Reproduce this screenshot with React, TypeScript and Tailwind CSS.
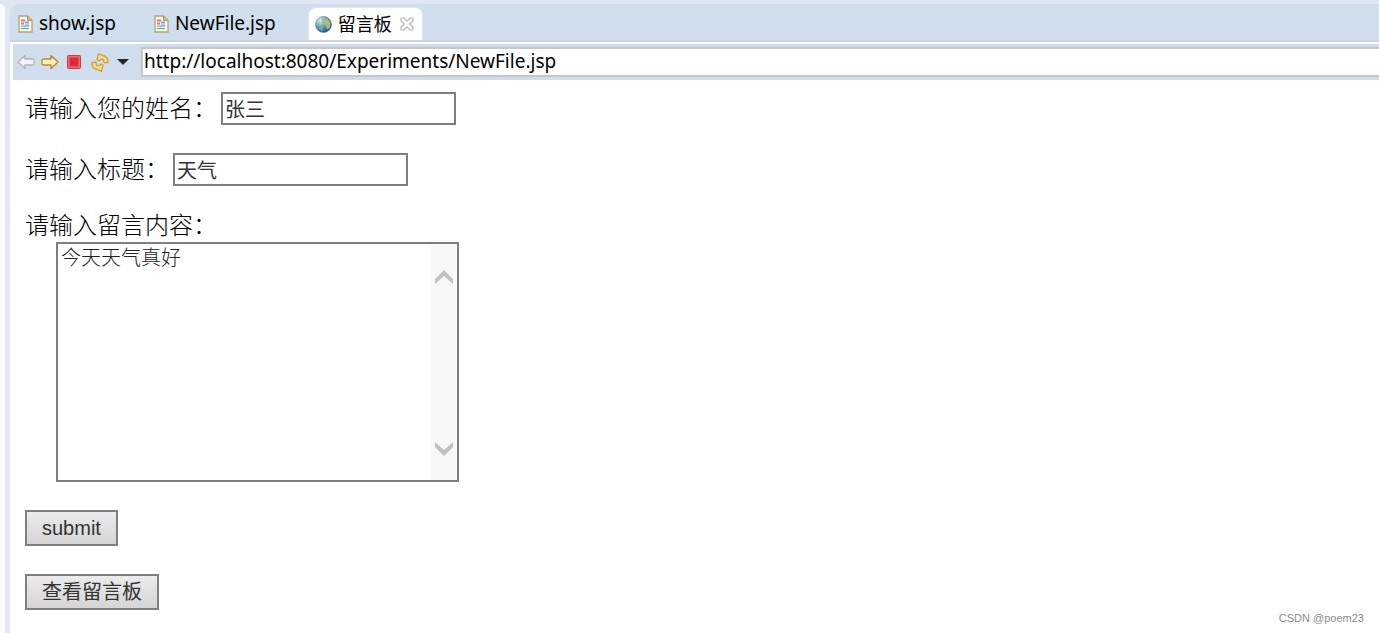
import { useState } from "react"
import type { FormEvent, ReactNode } from "react"

const uiFont = "font-['Noto_Sans','Noto_Sans_CJK_SC',sans-serif]"
const formFont = "font-['Liberation_Sans','Noto_Sans_CJK_SC',sans-serif]"

function JspFileIcon() {
  return (
    <svg width="15" height="18" viewBox="0 0 15 18" fill="none" aria-hidden="true">
      <path d="M1 1h8.5L14 5.5V17H1z" fill="#fbfaf0" stroke="#b3a36e" strokeWidth="1.3" />
      <path d="M9.5 1v4.5H14z" fill="#dcc27c" stroke="#b59b58" />
      <path d="M3 5.5h4M3 8.5h3" stroke="#e5707f" strokeWidth="2" />
      <path d="M7 7.5h4M7 10.5h4" stroke="#7da3e0" strokeWidth="2" />
      <path d="M3 11h4" stroke="#a5b9dd" strokeWidth="1.5" />
      <path d="M3 13.5h8" stroke="#6fbaa5" strokeWidth="1.5" />
    </svg>
  )
}

function GlobeIcon() {
  return (
    <svg width="17" height="17" viewBox="0 0 17 17" aria-hidden="true">
      <defs>
        <radialGradient id="globe" cx="0.3" cy="0.25" r="0.85">
          <stop offset="0" stopColor="#e2f3fa" />
          <stop offset="0.45" stopColor="#62a3cd" />
          <stop offset="1" stopColor="#1d4781" />
        </radialGradient>
      </defs>
      <circle cx="8.5" cy="8.5" r="8" fill="url(#globe)" stroke="#55789c" strokeWidth="0.6" />
      <path d="M6.5 3.5 9 2l4 1 2.5 4-.5 4-2 2.5-1.5-1L11 9.500 8.5 8 7 6z" fill="#a9bd72" />
      <path d="m2 5 2.5-2.5 1 1.500-2 3z" fill="#c4d8a2" />
      <path d="m4 10 3 .5 1.500 2-1.500 2.500-2.500-2z" fill="#7fae86" />
    </svg>
  )
}

function CloseIcon() {
  return (
    <svg width="14" height="14" viewBox="0 0 14 14" aria-hidden="true">
      <path
        d="M1 1h3l3 3.200L10 1h3v3L9.800 7l3.200 3v3h-3L7 9.800 4 13H1v-3l3.200-3L1 4z"
        fill="#fff"
        stroke="#b5b5b5"
        strokeWidth="1.2"
        strokeLinejoin="round"
      />
    </svg>
  )
}

function ArrowIcon({ back = false }: { back?: boolean }) {
  return (
    <svg width="18" height="16" viewBox="0 0 18 16" aria-hidden="true">
      {back ? (
        <path d="M1 8l7-6.500V5h7.500q1.500 0 1.500 1.500v3q0 1.500-1.500 1.500H8v3.500z" fill="#f5f5f5" stroke="#b3b4b7" strokeWidth="1.4" strokeLinejoin="round" />
      ) : (
        <path d="M17 8l-7-6.500V5H2.500Q1 5 1 6.500v3Q1 11 2.500 11H10v3.500z" fill="#fff0b8" stroke="#c18a28" strokeWidth="1.4" strokeLinejoin="round" />
      )}
    </svg>
  )
}

function StopIcon() {
  return (
    <svg width="14" height="14" viewBox="0 0 14 14" aria-hidden="true">
      <rect x="0.5" y="0.5" width="13" height="13" rx="1" fill="#ea6a73" stroke="#cf3946" />
      <rect x="3" y="3" width="8" height="8" fill="#e32534" stroke="#d5303d" strokeWidth="0.8" />
    </svg>
  )
}

function RefreshIcon() {
  return (
    <svg width="18" height="19" viewBox="0 0 18 19" aria-hidden="true">
      <g fill="#fbd987" stroke="#cf962f" strokeWidth="1.1" strokeLinejoin="round">
        <path d="M7.500 1 6 7l2 1.500 1.500-1.500L11 6.500c1.500.3 2 1.500 2 3.500h4c.3-4-1.500-7-5.500-7z" transform="translate(0 -.4)" />
        <path d="M10.500 18 12 12l-2-1.500L8.500 12 7 12.500c-1.500-.3-2-1.500-2-3.500H1c-.3 4 1.500 7 5.500 7z" transform="translate(0 .4)" />
      </g>
    </svg>
  )
}

function Tab({ icon, title, active = false }: { icon: ReactNode; title: string; active?: boolean }) {
  if (active) {
    return (
      <div className="flex items-center gap-2 rounded-t-lg border border-b-0 border-[#dfe5f0] bg-white px-1.5">
        <button type="button" role="tab" aria-selected="true" className="flex items-center gap-1.5 text-lg whitespace-nowrap">
          {icon}
          {title}
        </button>
        <button type="button" aria-label="Close" className="pr-0.5">
          <CloseIcon />
        </button>
      </div>
    )
  }
  return (
    <button type="button" role="tab" aria-selected="false" className="flex items-center gap-1.5 whitespace-nowrap">
      {icon}
      {title}
    </button>
  )
}

function Chevron({ down = false }: { down?: boolean }) {
  return (
    <svg width="18" height="14" viewBox="0 0 18 14" fill="#c1c1c1" aria-hidden="true">
      {down ? <path d="M0 0v5l9 9 9-9V0L9 8z" /> : <path d="M0 14V9l9-9 9 9v5L9 6z" />}
    </svg>
  )
}

function Toolbar() {
  const [url, setUrl] = useState("http://localhost:8080/Experiments/NewFile.jsp")

  return (
    <div className="ml-[3px] mt-0.5 flex h-9 items-center bg-[#cfdded] pl-1">
      <div className="flex flex-none items-center gap-1.5">
        <button type="button" aria-label="Back">
          <ArrowIcon back />
        </button>
        <button type="button" aria-label="Forward">
          <ArrowIcon />
        </button>
        <button type="button" aria-label="Stop" className="px-0.5">
          <StopIcon />
        </button>
        <button type="button" aria-label="Refresh" className="pl-0.5">
          <RefreshIcon />
        </button>
        <button type="button" aria-label="History" className="px-0.5">
          <svg width="12" height="6" viewBox="0 0 12 6" aria-hidden="true">
            <path d="M0 0h12L6 6z" fill="#272727" />
          </svg>
        </button>
      </div>
      <input
        type="text"
        aria-label="URL"
        value={url}
        onChange={(e) => setUrl(e.target.value)}
        className="ml-2.5 h-[30px] min-w-0 flex-1 border-2 border-r-0 border-[#c3c8cd] bg-white px-px pb-0.5 text-[19px] outline-none"
      />
    </div>
  )
}

function MessageForm() {
  const [name, setName] = useState("张三")
  const [title, setTitle] = useState("天气")
  const [content, setContent] = useState("今天天气真好")

  const handleSubmit = (e: FormEvent) => e.preventDefault()

  const label = "text-2xl leading-8 font-light text-black"
  const input = "h-[33px] w-[235px] border-2 border-[#7f7f7f] bg-white px-0.5 text-xl text-[#333] outline-none"
  const button = "h-9 self-start border-2 border-[#7f7f7f] bg-linear-to-b from-[#ebebeb] to-[#d5d5d5] px-[15px] text-xl leading-7 text-[#333]"

  return (
    <form onSubmit={handleSubmit} className={`flex flex-1 flex-col px-[15px] pt-3 pb-2 ${formFont}`}>
      <div className="flex items-center gap-1">
        <label htmlFor="name" className={label}>
          请输入您的姓名：
        </label>
        <input id="name" type="text" value={name} onChange={(e) => setName(e.target.value)} className={input} />
      </div>
      <div className="mt-7 flex items-center gap-1">
        <label htmlFor="title" className={label}>
          请输入标题：
        </label>
        <input id="title" type="text" value={title} onChange={(e) => setTitle(e.target.value)} className={input} />
      </div>
      <label htmlFor="content" className={`mt-6 ${label}`}>
        请输入留言内容：
      </label>
      <div className="ml-[31px] flex h-60 w-[403px] border-2 border-[#7f7f7f]">
        <textarea
          id="content"
          value={content}
          onChange={(e) => setContent(e.target.value)}
          className="min-w-0 flex-1 resize-none overflow-hidden px-[3px] text-xl leading-7 font-light text-[#222] outline-none"
        />
        <div className="flex w-[26px] flex-none flex-col items-center justify-between bg-[#f8f8f8] py-6">
          <button type="button" aria-label="Scroll up" className="py-0.5">
            <Chevron />
          </button>
          <button type="button" aria-label="Scroll down">
            <Chevron down />
          </button>
        </div>
      </div>
      <button type="submit" className={`mt-7 ${button}`}>
        submit
      </button>
      <button type="button" className={`mt-7 ${button}`}>
        查看留言板
      </button>
      <footer className="self-end text-[11px] leading-4 text-[#8c8c8c]">CSDN @poem23</footer>
    </form>
  )
}

export default function App() {
  return (
    <div className={`flex min-h-screen bg-[#e1e6f5] pt-1 text-black ${uiFont}`}>
      <div className="mr-[5px] w-[5px] flex-none rounded-tr-lg bg-[#fafbfe]" />
      <main className="flex min-w-0 flex-1 flex-col rounded-tl-lg bg-white">
        <div
          role="tablist"
          className="flex h-[38px] flex-none gap-8 rounded-tl-lg border-t border-b-2 border-t-[#d5dae8] border-b-[#c9d4e5] bg-[#d0dfee] pt-0.5 pl-2 text-[19px]"
        >
          <div className="mr-1.5 flex">
            <Tab icon={<JspFileIcon />} title="show.jsp" />
          </div>
          <Tab icon={<JspFileIcon />} title="NewFile.jsp" />
          <Tab icon={<GlobeIcon />} title="留言板" active />
        </div>
        <Toolbar />
        <MessageForm />
      </main>
    </div>
  )
}
